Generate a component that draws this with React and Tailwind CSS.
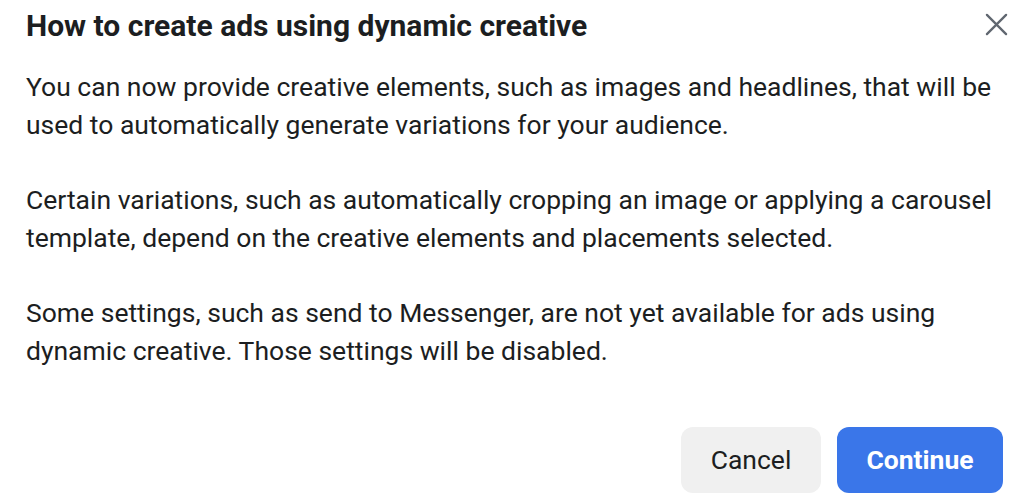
import React from 'react';

function App() {
  return (
    <div className="w-[1024px] h-[504px] bg-white font-['Roboto',sans-serif] text-[#1c1e21] relative">
      <div className="flex items-start justify-between pl-[26px] pr-[12px] pt-[7px]">
        <h1 className="text-[30px] leading-[38px] font-bold">How to create ads using dynamic creative</h1>
        <button className="w-[32px] h-[32px] mt-[1px] flex items-center justify-center text-[#606770]">
          <svg width="23" height="23" viewBox="0 0 24 24" fill="none" stroke="currentColor" strokeWidth="2.4" strokeLinecap="round">
            <path d="M2 2L22 22M22 2L2 22" />
          </svg>
        </button>
      </div>
      <div className="pl-[26px] pr-[20px] pt-[23px] text-[26.5px] leading-[38px] flex flex-col gap-[37px]">
        <p>You can now provide creative elements, such as images and headlines, that will be used to automatically generate variations for your audience.</p>
        <p>Certain variations, such as automatically cropping an image or applying a carousel template, depend on the creative elements and placements selected.</p>
        <p>Some settings, such as send to Messenger, are not yet available for ads using dynamic creative. Those settings will be disabled.</p>
      </div>
      <div className="absolute right-[21px] bottom-[11px] flex gap-[16px]">
        <button className="w-[140px] h-[66px] rounded-[12px] bg-[#f0f0f0] text-[26.5px] text-[#1c1e21]">Cancel</button>
        <button className="w-[166px] h-[66px] rounded-[12px] bg-[#3a76e9] text-[26.5px] font-bold text-white">Continue</button>
      </div>
    </div>
  );
}

export default App;
